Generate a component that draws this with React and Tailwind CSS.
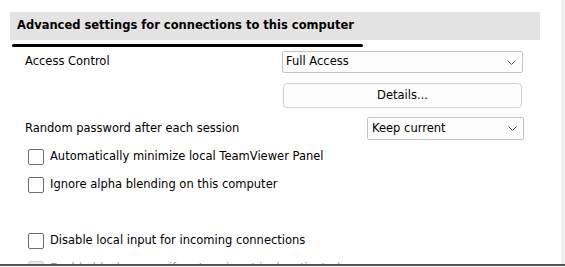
import React from 'react';

function Chevron() {
  return (
    <svg width="9" height="5" viewBox="0 0 9 5" className="shrink-0">
      <path d="M0.5 0.5 L4.5 4.5 L8.5 0.5" fill="none" stroke="#555" strokeWidth="1" />
    </svg>
  );
}

function Select({ value, className }) {
  return (
    <div
      className={`flex items-center justify-between bg-[#fdfdfd] border border-[#c4c4c4] rounded-[2px] pl-[3px] pr-[6px] text-black ${className}`}
    >
      <span>{value}</span>
      <Chevron />
    </div>
  );
}

function Checkbox({ label, disabled }) {
  return (
    <div className="flex items-center h-[16px] pl-[28px] gap-[6px]">
      <div
        className={`w-[16px] h-[16px] rounded-[2px] border-[1.5px] ${
          disabled ? 'border-[#d0d0d0] bg-[#ececec]' : 'border-[#6e6e6e] bg-white'
        }`}
      />
      <span className={disabled ? 'text-[#a0a0a0]' : 'text-black'}>{label}</span>
    </div>
  );
}

export default function App() {
  return (
    <div
      className="w-[565px] h-[267px] bg-white overflow-hidden text-[11.5px] leading-none"
      style={{ fontFamily: '"DejaVu Sans", Tahoma, sans-serif' }}
    >
      <div className="h-[264px] flex overflow-hidden">
        {/* main panel */}
        <div className="w-[561px] pt-[12px]">
          <div className="ml-[10px] w-[530px] h-[28px] bg-[#e3e3e3] pl-[7px] flex items-center font-bold text-black">
            Advanced settings for connections to this computer
          </div>
          <div className="ml-[12px] mt-[4px] w-[351px] h-[3px] rounded-full bg-black" />

          {/* Access control */}
          <div className="mt-[4px] flex items-center h-[22px]">
            <span className="w-[282px] pl-[25px] text-black">Access Control</span>
            <Select value="Full Access" className="w-[241px] h-[22px]" />
          </div>

          <div className="mt-[10px] flex">
            <button className="ml-[283px] w-[239px] h-[25px] rounded-[4px] border border-[#d2d2d2] bg-[#fdfdfd] text-black">
              Details...
            </button>
          </div>

          {/* Random password */}
          <div className="mt-[9px] flex items-center h-[23px]">
            <span className="w-[367px] pl-[25px] text-black">Random password after each session</span>
            <Select value="Keep current" className="w-[157px] h-[23px] pl-[4px]" />
          </div>

          <div className="mt-[9px]">
            <Checkbox label="Automatically minimize local TeamViewer Panel" />
          </div>
          <div className="mt-[12px]">
            <Checkbox label="Ignore alpha blending on this computer" />
          </div>
          <div className="mt-[40px]">
            <Checkbox label="Disable local input for incoming connections" />
          </div>
          <div className="mt-[12px]">
            <Checkbox label="Enable black screen if partner input is deactivated" disabled />
          </div>
        </div>
        {/* scroll strip */}
        <div className="w-[4px] bg-[#f0f0f0]" />
      </div>
      <div className="h-[2px] bg-[#555555]" />
    </div>
  );
}
